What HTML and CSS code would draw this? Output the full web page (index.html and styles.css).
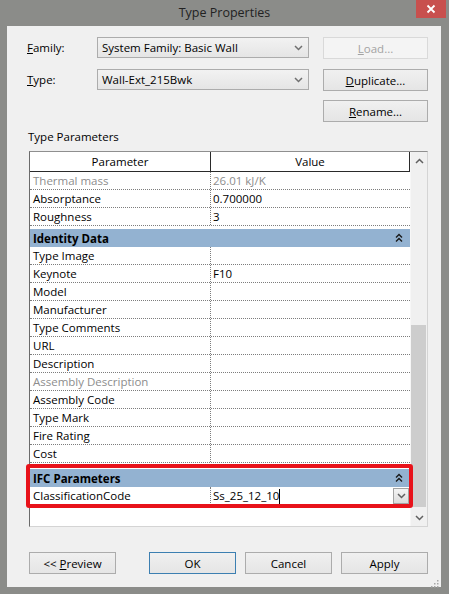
FILE: index.html
```html
<!DOCTYPE html>
<html>
<head>
<meta charset="utf-8">
<link rel="stylesheet" href="styles.css">
</head>
<body>
<div class="window">
  <div class="titlebar">
    <span></span>
    <span class="title">Type Properties</span>
    <div class="close">
      <svg width="10" height="10" viewBox="0 0 10 10"><path d="M1.5 1.5 L8.5 8.5 M8.5 1.5 L1.5 8.5" stroke="#fff" stroke-width="1.8" fill="none"/></svg>
    </div>
  </div>
  <div class="client">
    <div class="top">
      <div class="label"><u>F</u>amily:</div>
      <div class="combo"><span>System Family: Basic Wall</span>
        <svg class="chev" width="9" height="6" viewBox="0 0 9 6"><path d="M1 1 L4.5 4.5 L8 1" stroke="#707070" stroke-width="1.5" fill="none"/></svg></div>
      <div class="btn disabled"><span><u>L</u>oad...</span></div>
      <div class="label"><u>T</u>ype:</div>
      <div class="combo"><span>Wall-Ext_215Bwk</span>
        <svg class="chev" width="9" height="6" viewBox="0 0 9 6"><path d="M1 1 L4.5 4.5 L8 1" stroke="#707070" stroke-width="1.5" fill="none"/></svg></div>
      <div class="btn"><span><u>D</u>uplicate...</span></div>
      <div class="btn rename"><span><u>R</u>ename...</span></div>
    </div>
    <div class="section-label">Type Parameters</div>
    <div class="grid-wrap">
      <div class="table">
        <div class="rows">
          <div class="row head">
            <div class="hcell">Parameter</div>
            <div class="hcell">Value</div>
          </div>
          <div class="row"><div class="pcell grey">Thermal mass</div><div class="vcell grey">26.01 kJ/K</div></div>
          <div class="row"><div class="pcell">Absorptance</div><div class="vcell">0.700000</div></div>
          <div class="row"><div class="pcell">Roughness</div><div class="vcell">3</div></div>
          <div class="group g1"><span>Identity Data</span>
            <svg width="8" height="10" viewBox="0 0 8 10"><path d="M1 4.5 L4 1.5 L7 4.5 M1 8.5 L4 5.5 L7 8.5" stroke="#1a1a1a" stroke-width="1.4" fill="none"/></svg></div>
          <div class="row"><div class="pcell">Type Image</div><div class="vcell"></div></div>
          <div class="row"><div class="pcell">Keynote</div><div class="vcell">F10</div></div>
          <div class="row"><div class="pcell">Model</div><div class="vcell"></div></div>
          <div class="row"><div class="pcell">Manufacturer</div><div class="vcell"></div></div>
          <div class="row"><div class="pcell">Type Comments</div><div class="vcell"></div></div>
          <div class="row"><div class="pcell">URL</div><div class="vcell"></div></div>
          <div class="row"><div class="pcell">Description</div><div class="vcell"></div></div>
          <div class="row"><div class="pcell grey">Assembly Description</div><div class="vcell"></div></div>
          <div class="row"><div class="pcell">Assembly Code</div><div class="vcell"></div></div>
          <div class="row"><div class="pcell">Type Mark</div><div class="vcell"></div></div>
          <div class="row"><div class="pcell">Fire Rating</div><div class="vcell"></div></div>
          <div class="row"><div class="pcell">Cost</div><div class="vcell"></div></div>
          <div class="group g2"><span>IFC Parameters</span>
            <svg width="8" height="10" viewBox="0 0 8 10"><path d="M1 4.5 L4 1.5 L7 4.5 M1 8.5 L4 5.5 L7 8.5" stroke="#1a1a1a" stroke-width="1.4" fill="none"/></svg></div>
          <div class="row last"><div class="pcell">ClassificationCode</div>
            <div class="vcell edit"><span class="caret">Ss_25_12_10</span>
              <div class="dd"><svg width="9" height="6" viewBox="0 0 9 6"><path d="M1 1 L4.5 4.5 L8 1" stroke="#606060" stroke-width="1.5" fill="none"/></svg></div>
            </div></div>
        </div>
        <div class="scroll">
          <div class="arrow"><svg width="9" height="6" viewBox="0 0 9 6"><path d="M1 5 L4.5 1.5 L8 5" stroke="#606060" stroke-width="1.5" fill="none"/></svg></div>
          <div class="track"><div class="thumb"></div></div>
          <div class="arrow"><svg width="9" height="6" viewBox="0 0 9 6"><path d="M1 1 L4.5 4.5 L8 1" stroke="#606060" stroke-width="1.5" fill="none"/></svg></div>
        </div>
      </div>
      <div class="highlight"></div>
    </div>
    <div class="buttons">
      <div class="btn wide preview"><span>&lt;&lt; <u>P</u>review</span></div>
      <div class="btn wide ok"><span>OK</span></div>
      <div class="btn wide"><span>Cancel</span></div>
      <div class="btn wide"><span>Apply</span></div>
    </div>
    <div class="grip">
      <svg width="9" height="9" viewBox="0 0 9 9" fill="#a8a8a8"><rect x="7" y="1" width="1.5" height="1.5"/><rect x="4" y="4" width="1.5" height="1.5"/><rect x="7" y="4" width="1.5" height="1.5"/><rect x="1" y="7" width="1.5" height="1.5"/><rect x="4" y="7" width="1.5" height="1.5"/><rect x="7" y="7" width="1.5" height="1.5"/></svg>
    </div>
  </div>
</div>
</body>
</html>
```
FILE: styles.css
```css
* { box-sizing: border-box; }
html, body { margin: 0; padding: 0; }
body {
  background: #8b8c89;
  font-family: "Open Sans", "Noto Sans", sans-serif;
  font-size: 11.5px;
  color: #000;
  width: 449px;
  height: 594px;
  overflow: hidden;
}
u { text-decoration: underline; text-underline-offset: 1px; }
.window { display: flex; flex-direction: column; height: 594px; }
.titlebar {
  height: 26px;
  display: grid;
  grid-template-columns: 1fr auto 1fr;
  align-items: start;
}
.title { font-size: 12.5px; color: #222; line-height: 25px; }
.close {
  justify-self: end;
  margin-right: 3px;
  width: 30px;
  height: 18px;
  background: #c8504e;
  display: flex;
  align-items: center;
  justify-content: center;
}
.client {
  flex: 1;
  margin: 0 8px 7px 7px;
  background: #f0f0f0;
  display: flex;
  flex-direction: column;
}
.top {
  display: grid;
  grid-template-columns: 56px 212px 105px;
  grid-template-rows: 32px 31px 22px;
  column-gap: 14px;
  padding: 11px 0 0 20px;
}
.label { height: 21px; line-height: 21px; color: #000; }
.combo {
  height: 21px;
  border: 1px solid #acacac;
  background: linear-gradient(#f2f2f2, #e5e5e5);
  display: flex;
  align-items: center;
  justify-content: space-between;
  padding: 0 5px 0 4px;
}
.btn {
  height: 22px;
  border: 1px solid #acacac;
  background: linear-gradient(#f0f0f0, #e5e5e5);
  display: flex;
  align-items: center;
  justify-content: center;
}
.btn.disabled { border-color: #d9d9d9; background: #f4f4f4; color: #a3a3a3; }
.rename { grid-column: 3; }
.section-label { margin: 7px 0 0 21px; line-height: 16px; }
.grid-wrap {
  position: relative;
  margin: 6px 0 0 22px;
  width: 399px;
  height: 376px;
}
.table {
  display: flex;
  height: 100%;
  border: 1px solid;
  border-color: #8f8f8f #d4d4d4 #d4d4d4 #6b6b6b;
  background: #fff;
}
.rows { width: 380px; }
.row {
  display: grid;
  grid-template-columns: 181px 1fr;
  height: 18px;
  border-bottom: 1px dotted #7d7d7d;
}
.row.last { border-bottom: none; }
.row.head { height: 20px; border-bottom: 1px solid #2a2a2a; }
.hcell {
  text-align: center;
  line-height: 19px;
  border-right: 1px solid #2a2a2a;
}
.pcell {
  padding-left: 3px;
  line-height: 17px;
  border-right: 1px dotted #7d7d7d;
  white-space: nowrap;
}
.vcell { padding-left: 2px; line-height: 17px; }
.grey { color: #8d8d8d; }
.group {
  height: 18px;
  background: #93b2d1;
  font-weight: bold;
  display: flex;
  align-items: center;
  justify-content: space-between;
  padding: 0 7px 0 3px;
}
.g1 { margin-top: 3px; }
.g2 { margin-top: 6px; }
.edit { display: flex; justify-content: space-between; padding-right: 1px; }
.caret { border-right: 1px solid #000; line-height: 14px; height: 15px; margin-top: 2px; padding-right: 0; }
.dd {
  width: 16px;
  height: 16px;
  margin-top: 1px;
  border: 1px solid #a3a3a3;
  background: linear-gradient(#f4f4f4, #dcdcdc);
  display: flex;
  align-items: center;
  justify-content: center;
}
.scroll {
  width: 17px;
  display: flex;
  flex-direction: column;
  background: #f0f0f0;
  border-left: 1px solid #f7f7f7;
}
.arrow { height: 17px; display: flex; align-items: center; justify-content: center; }
.track { flex: 1; }
.thumb { margin: 156px 0 0 0; height: 182px; background: #cdcdcd; width: 15px; }
.highlight {
  position: absolute;
  left: -3px;
  top: 313px;
  width: 387px;
  height: 44px;
  border: 4px solid #e8121a;
  border-radius: 3px;
}
.buttons { display: flex; margin: 25px 0 0 22px; gap: 9px; }
.btn.wide { width: 87px; }
.preview { margin-right: 24px; }
.ok { border-color: #3c7fb1; }
.grip { margin-top: auto; align-self: flex-end; height: 11px; width: 11px; }
```
